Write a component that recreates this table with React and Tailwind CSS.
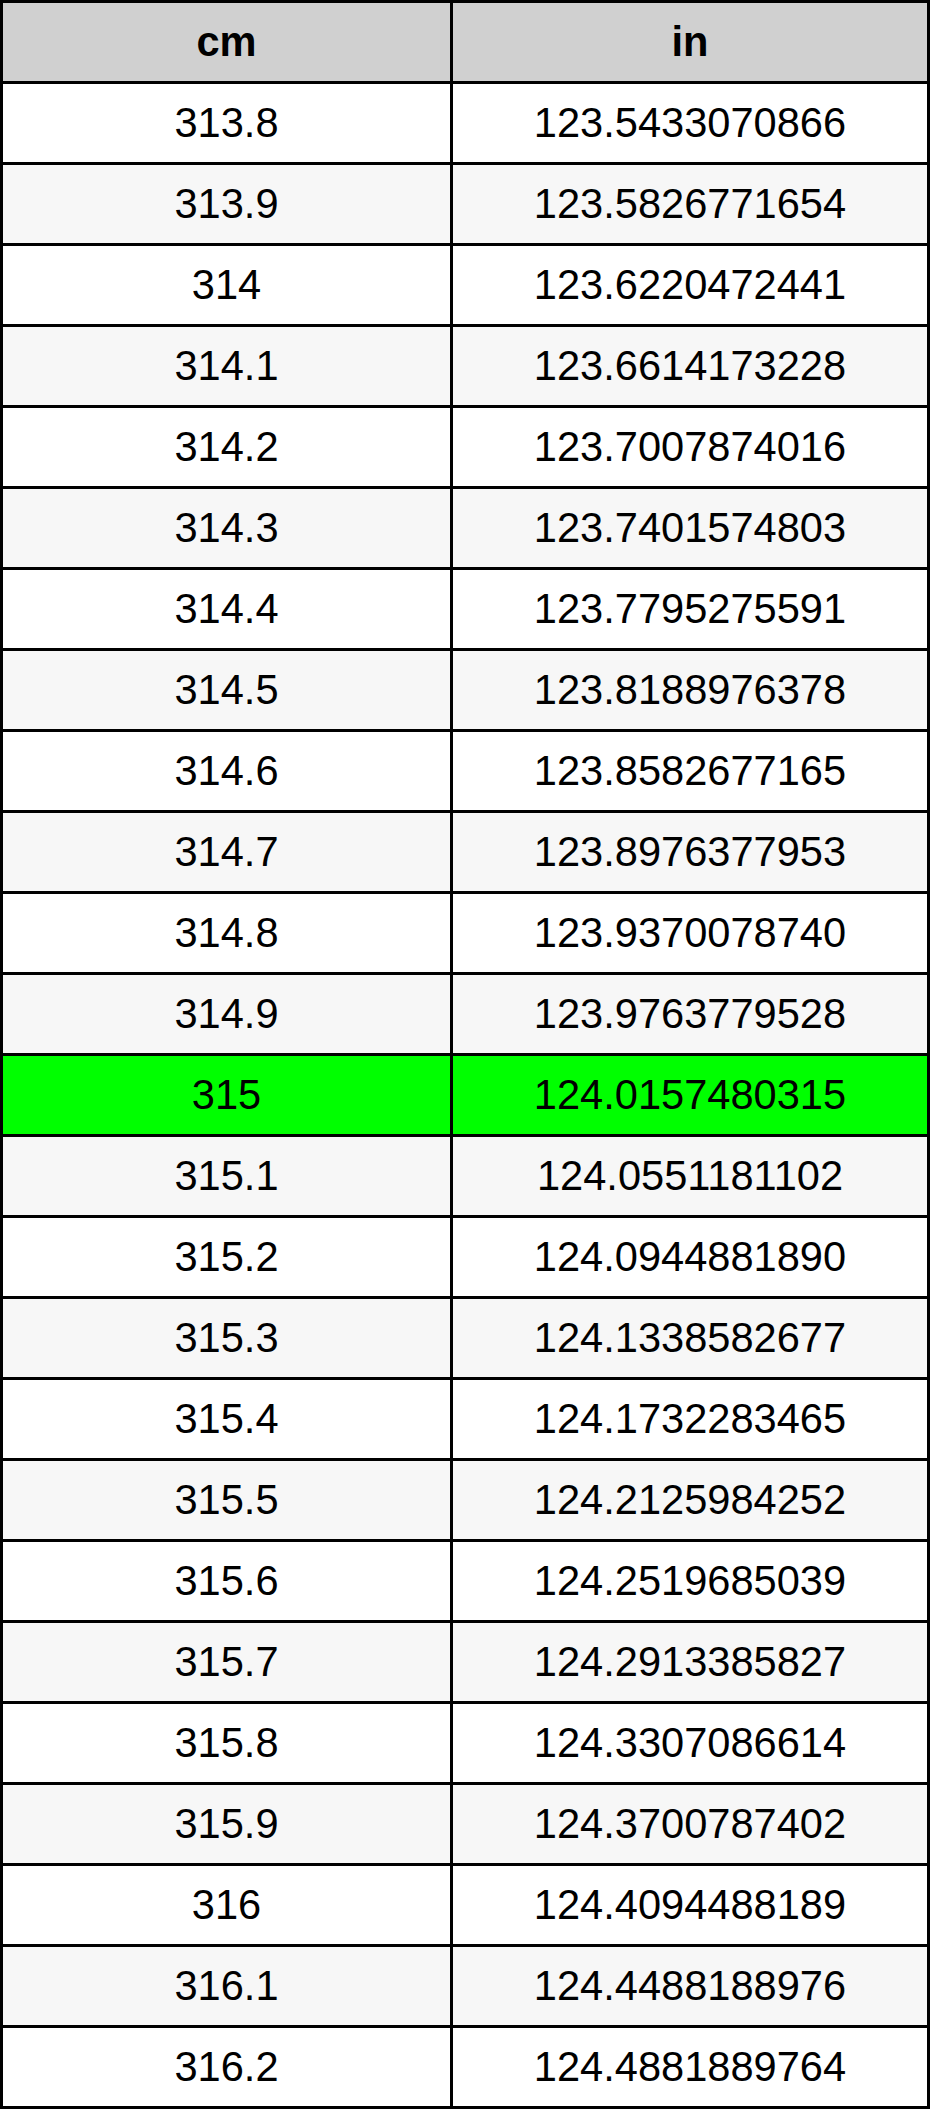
import React from "react";

const rows = [
  ["313.8", "123.5433070866"],
  ["313.9", "123.5826771654"],
  ["314", "123.6220472441"],
  ["314.1", "123.6614173228"],
  ["314.2", "123.7007874016"],
  ["314.3", "123.7401574803"],
  ["314.4", "123.7795275591"],
  ["314.5", "123.8188976378"],
  ["314.6", "123.8582677165"],
  ["314.7", "123.8976377953"],
  ["314.8", "123.9370078740"],
  ["314.9", "123.9763779528"],
  ["315", "124.0157480315"],
  ["315.1", "124.0551181102"],
  ["315.2", "124.0944881890"],
  ["315.3", "124.1338582677"],
  ["315.4", "124.1732283465"],
  ["315.5", "124.2125984252"],
  ["315.6", "124.2519685039"],
  ["315.7", "124.2913385827"],
  ["315.8", "124.3307086614"],
  ["315.9", "124.3700787402"],
  ["316", "124.4094488189"],
  ["316.1", "124.4488188976"],
  ["316.2", "124.4881889764"],
];

export default function App() {
  return (
    <div
      className="w-[930px] bg-white text-black"
      style={{ fontFamily: '"Liberation Sans", Arial, sans-serif' }}
    >
      <div className="border-[3px] border-black">
        <div className="flex h-[78px] bg-[#d0d0d0] font-bold text-[41.6px]">
          <div className="w-[450px] border-r-[3px] border-black flex items-center justify-center">
            cm
          </div>
          <div className="flex-1 flex items-center justify-center">in</div>
        </div>
        {rows.map(([a, b], i) => {
          const bg =
            a === "315"
              ? "bg-[#00ff00]"
              : i % 2 === 0
              ? "bg-white"
              : "bg-[#f7f7f7]";
          return (
            <div
              key={a}
              className={`flex h-[81px] border-t-[3px] border-black text-[41.6px] ${bg}`}
            >
              <div className="w-[450px] border-r-[3px] border-black flex items-center justify-center">
                {a}
              </div>
              <div className="flex-1 flex items-center justify-center">{b}</div>
            </div>
          );
        })}
      </div>
    </div>
  );
}
